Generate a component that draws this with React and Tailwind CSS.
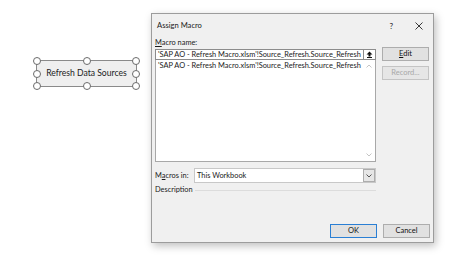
import React from 'react';

const font = { fontFamily: 'Lato, "Noto Sans", sans-serif' };

function Handle({ className }) {
  return <span className={`absolute w-[8px] h-[8px] rounded-full bg-white border border-[#6b6b6b] ${className}`} />;
}

function ShapeButton() {
  return (
    <div className="relative mt-[60px] ml-[36px] w-[101px] h-[27px] bg-[#efefef] border border-[#8a8a8a] flex items-center justify-center">
      <span className="text-[8.6px] text-[#222]">Refresh Data Sources</span>
      <Handle className="-left-[4px] -top-[4px]" />
      <Handle className="left-[46px] -top-[4px]" />
      <Handle className="-right-[4px] -top-[4px]" />
      <Handle className="-left-[4px] top-[9px]" />
      <Handle className="-right-[4px] top-[9px]" />
      <Handle className="-left-[4px] -bottom-[4px]" />
      <Handle className="left-[46px] -bottom-[4px]" />
      <Handle className="-right-[4px] -bottom-[4px]" />
    </div>
  );
}

function Btn({ children, disabled, primary }) {
  return (
    <div
      className={`w-[47px] h-[14px] flex items-center justify-center text-[7.5px] border ${
        primary ? 'border-[#2a7fd4] bg-[#e1e1e1] text-[#111]' : disabled ? 'border-[#c4c4c4] bg-[#e6e6e6] text-[#a8a8a8]' : 'border-[#adadad] bg-[#e1e1e1] text-[#111]'
      }`}
    >
      {children}
    </div>
  );
}

export default function App() {
  return (
    <div className="w-[474px] h-[257px] bg-white flex items-start" style={font}>
      <ShapeButton />
      <div className="ml-[14px] mt-[13px] w-[283px] h-[230px] bg-[#f0f0f0] border border-[#9c9c9c] shadow-[2px_3px_8px_rgba(0,0,0,0.25)] flex flex-col text-[#1a1a1a]">
        <div className="h-[22px] pt-[2px] flex items-center pl-[5px] pr-[10px] text-[7.6px]">
          <span>Assign Macro</span>
          <span className="ml-auto mr-[22px] text-[8px]">?</span>
          <svg width="8" height="8" viewBox="0 0 8 8"><path d="M0.5 0.5 L7.5 7.5 M7.5 0.5 L0.5 7.5" stroke="#222" strokeWidth="0.9" /></svg>
        </div>
        <div className="flex px-[3px] pt-[1px]">
          <div className="w-[221px] flex flex-col">
            <span className="text-[7.4px] leading-[12px]"><u>M</u>acro name:</span>
            <div className="h-[11px] flex bg-white border border-[#8c8c8c]">
              <span className="flex-1 overflow-hidden whitespace-nowrap text-[7.4px] leading-[9px] pl-[2px]">'SAP AO - Refresh Macro.xlsm'!Source_Refresh.Source_Refresh</span>
              <div className="w-[12px] flex items-center justify-center border-l border-[#8c8c8c]">
                <svg width="7" height="7" viewBox="0 0 7 7"><path d="M3.5 0.5 L6.5 3.5 H4.5 V5.5 H2.5 V3.5 H0.5 Z" fill="#111" /><rect x="1" y="6" width="5" height="1" fill="#111" /></svg>
              </div>
            </div>
            <div className="h-[102px] flex bg-white border border-[#a8a8a8] border-t-0">
              <span className="flex-1 whitespace-nowrap overflow-hidden text-[7.4px] leading-[10px] pl-[2px] pt-[1px]">'SAP AO - Refresh Macro.xlsm'!Source_Refresh.Source_Refresh</span>
              <div className="w-[12px] flex flex-col items-center justify-between py-[4px]">
                <svg width="6" height="4" viewBox="0 0 6 4"><path d="M0.5 3.5 L3 1 L5.5 3.5" stroke="#c4c4c4" fill="none" /></svg>
                <svg width="6" height="4" viewBox="0 0 6 4"><path d="M0.5 0.5 L3 3 L5.5 0.5" stroke="#c4c4c4" fill="none" /></svg>
              </div>
            </div>
            <div className="mt-[6px] flex items-center h-[15px]">
              <span className="w-[39px] text-[7.4px]">M<u>a</u>cros in:</span>
              <div className="flex-1 h-[15px] flex items-center bg-white border border-[#c8c8c8]">
                <span className="flex-1 text-[7.4px] pl-[2px]">This Workbook</span>
                <div className="w-[12px] h-[13px] flex items-center justify-center border border-[#adadad] bg-[#e6e6e6]">
                  <svg width="6" height="4" viewBox="0 0 6 4"><path d="M0.5 0.5 L3 3 L5.5 0.5" stroke="#555" fill="none" /></svg>
                </div>
              </div>
            </div>
            <div className="mt-[1px] flex items-center">
              <span className="text-[7.4px] leading-[12px]">Description</span>
              <div className="flex-1 ml-[2px] border-t border-[#dcdcdc]" />
            </div>
          </div>
          <div className="ml-[6px] mt-[10px] flex flex-col gap-[5px]">
            <Btn><u>E</u>dit</Btn>
            <Btn disabled>Record...</Btn>
          </div>
        </div>
        <div className="mt-auto mb-[4px] flex justify-end gap-[6px] pr-[3px]">
          <Btn primary>OK</Btn>
          <Btn>Cancel</Btn>
        </div>
      </div>
    </div>
  );
}
